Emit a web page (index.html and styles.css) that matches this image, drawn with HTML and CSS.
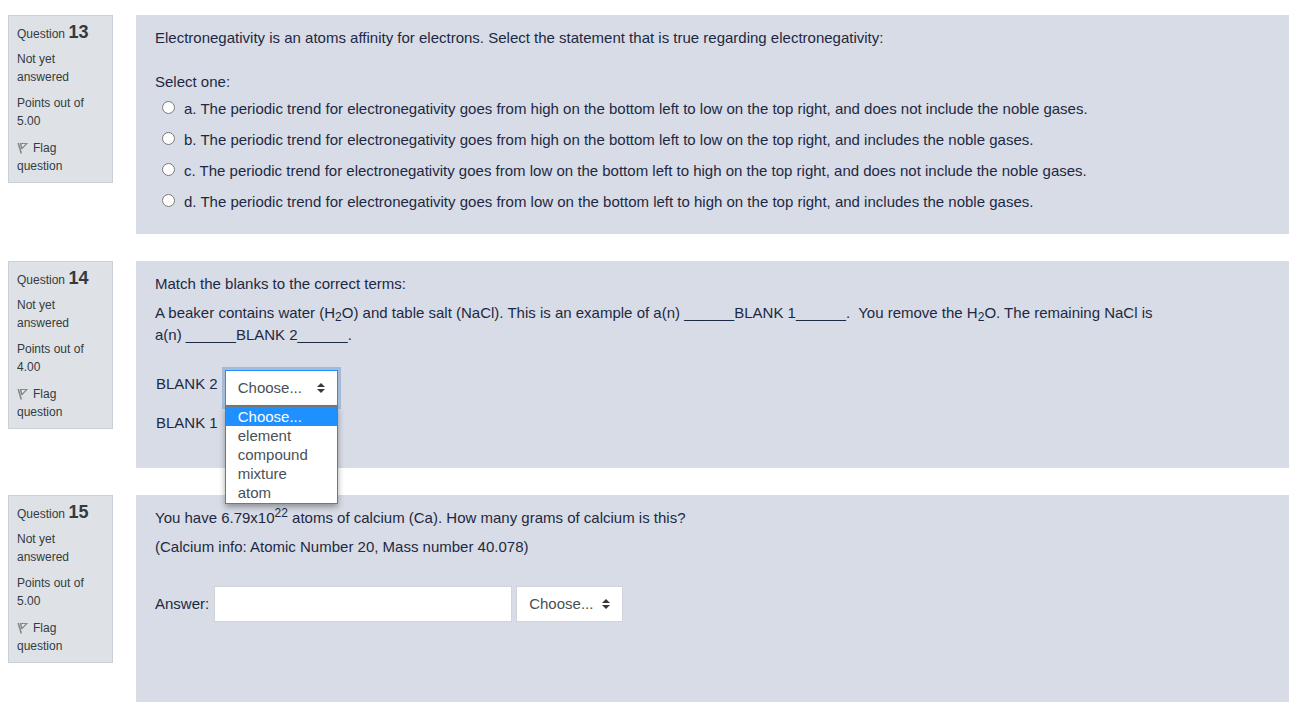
FILE: index.html
```html
<!DOCTYPE html>
<html lang="en">
  <head>
    <meta charset="UTF-8" />
    <meta name="viewport" content="width=device-width, initial-scale=1.0" />
    <title>Quiz</title>
    <link rel="stylesheet" href="styles.css">
  </head>
  <body>
    <!-- Flag icon shared by all questions -->
    <svg class="sprite" aria-hidden="true">
      <symbol id="flag" viewBox="0 0 12 12">
        <path d="M3 1.5H9.8L5 6.5" stroke="#8a8a8a" stroke-width="1.2" fill="#e8e8e8" />
        <path d="M1.2 1L4.3 11.5M3.5 1.5L5 7" stroke="#858585" stroke-width="1.5" fill="none" />
      </symbol>
    </svg>

    <!-- Question 13 -->
    <form class="question">
      <div class="info">
        <h3>Question <span class="number">13</span></h3>
        <p>Not yet answered</p>
        <p>Points out of 5.00</p>
        <a class="flag" href="#"><svg class="flag-icon" aria-hidden="true"><use href="#flag" /></svg>Flag question</a>
      </div>
      <div class="content">
        <p>Electronegativity is an atoms affinity for electrons. Select the statement that is true regarding electronegativity:</p>
        <fieldset class="answers">
          <legend>Select one:</legend>
          <div class="option">
            <input type="radio" id="q13a" name="q13" value="a" />
            <label for="q13a">a. The periodic trend for electronegativity goes from high on the bottom left to low on the top right, and does not include the noble gases.</label>
          </div>
          <div class="option">
            <input type="radio" id="q13b" name="q13" value="b" />
            <label for="q13b">b. The periodic trend for electronegativity goes from high on the bottom left to low on the top right, and includes the noble gases.</label>
          </div>
          <div class="option">
            <input type="radio" id="q13c" name="q13" value="c" />
            <label for="q13c">c. The periodic trend for electronegativity goes from low on the bottom left to high on the top right, and does not include the noble gases.</label>
          </div>
          <div class="option">
            <input type="radio" id="q13d" name="q13" value="d" />
            <label for="q13d">d. The periodic trend for electronegativity goes from low on the bottom left to high on the top right, and includes the noble gases.</label>
          </div>
        </fieldset>
      </div>
    </form>

    <!-- Question 14 -->
    <form class="question">
      <div class="info">
        <h3>Question <span class="number">14</span></h3>
        <p>Not yet answered</p>
        <p>Points out of 4.00</p>
        <a class="flag" href="#"><svg class="flag-icon" aria-hidden="true"><use href="#flag" /></svg>Flag question</a>
      </div>
      <div class="content">
        <p>Match the blanks to the correct terms:</p>
        <p>A beaker contains water (H<sub>2</sub>O) and table salt (NaCl). This is an example of a(n) ______BLANK 1______.&nbsp; You remove the H<sub>2</sub>O. The remaining NaCl is a(n)&nbsp;______BLANK&nbsp;2______.</p>
        <div class="match">
          <div class="match-row">
            <label for="blank2">BLANK 2</label>
            <div class="dropdown">
              <select id="blank2" class="select open" name="blank2">
                <option>Choose...</option>
                <option>element</option>
                <option>compound</option>
                <option>mixture</option>
                <option>atom</option>
              </select>
              <ul class="menu" role="listbox" aria-label="BLANK 2">
                <li class="selected" role="option" aria-selected="true">Choose...</li>
                <li role="option">element</li>
                <li role="option">compound</li>
                <li role="option">mixture</li>
                <li role="option">atom</li>
              </ul>
            </div>
          </div>
          <div class="match-row">
            <label for="blank1">BLANK 1</label>
            <select id="blank1" class="select" name="blank1">
              <option>Choose...</option>
              <option>element</option>
              <option>compound</option>
              <option>mixture</option>
              <option>atom</option>
            </select>
          </div>
        </div>
      </div>
    </form>

    <!-- Question 15 -->
    <form class="question">
      <div class="info">
        <h3>Question <span class="number">15</span></h3>
        <p>Not yet answered</p>
        <p>Points out of 5.00</p>
        <a class="flag" href="#"><svg class="flag-icon" aria-hidden="true"><use href="#flag" /></svg>Flag question</a>
      </div>
      <div class="content">
        <p>You have 6.79x10<sup>22</sup> atoms of calcium (Ca). How many grams of calcium is this?</p>
        <p>(Calcium info: Atomic Number 20, Mass number 40.078)</p>
        <div class="numeric">
          <label for="answer">Answer:</label>
          <input type="text" id="answer" class="answer" name="answer" />
          <select class="select" name="unit" aria-label="Unit">
            <option>Choose...</option>
            <option>g</option>
          </select>
        </div>
      </div>
    </form>
  </body>
</html>
```
FILE: styles.css
```css
* {
  box-sizing: border-box;
}
body {
  margin: 15px 10px 25px 8px;
  font-family: "Liberation Sans", Arial, sans-serif;
  font-size: 15px;
  line-height: 22px;
  color: #1d2943;
  background-color: #fff;
}
.sprite {
  display: none;
}
.question {
  display: flex;
  align-items: flex-start;
  gap: 23px;
  margin-bottom: 27px;
}

/* Left box */
.info {
  flex: 0 0 105px;
  padding: 7px 8px;
  border: 1px solid #cad0d7;
  background-color: #dee2e6;
  color: #343a40;
  font-size: 12px;
  line-height: 18px;
}
.info h3 {
  margin: 0 0 6px;
  font-size: 12px;
  font-weight: normal;
  line-height: 19px;
}
.number {
  font-size: 18px;
  font-weight: bold;
}
.info p {
  margin: 0 0 8px;
}
.flag {
  display: block;
  margin-top: 9px;
  color: inherit;
  text-decoration: none;
}
.flag-icon {
  width: 12px;
  height: 12px;
  margin-right: 4px;
  vertical-align: -2px;
}

/* Question text and answers */
.content {
  flex: 1;
  min-width: 0;
  min-height: 207px;
  padding: 12px 19px 16px;
  background-color: #d8dce6;
}
.content p {
  margin: 0 0 7px;
}
sub,
sup {
  position: relative;
  font-size: 12px;
  line-height: 0;
  vertical-align: baseline;
}
sub {
  bottom: -3px;
}
sup {
  top: -6px;
}
.answers {
  margin: 22px 0 0;
  padding: 0;
  border: 0;
}
.answers legend {
  padding: 0;
  margin-bottom: 5px;
}
.option {
  display: flex;
  align-items: flex-start;
  gap: 9px;
  padding-left: 7px;
  margin-bottom: 9px;
}
.option:last-child {
  margin-bottom: 5px;
}
.option input {
  flex: none;
  width: 13px;
  height: 13px;
  margin: 3px 0 0;
}

.select {
  display: block;
  height: 36px;
  padding: 6px 28px 6px 12px;
  border: 1px solid #ced4da;
  border-radius: 0;
  appearance: none;
  font: inherit;
  color: #495057;
  background: #fff url("data:image/svg+xml,%3Csvg xmlns='http://www.w3.org/2000/svg' viewBox='0 0 4 5'%3E%3Cpath fill='%23343a40' d='M2 0L0 2h4zm0 5L0 3h4z'/%3E%3C/svg%3E") no-repeat right 12px center / 8px 10px;
}
.select.open {
  border-color: #1e90ff;
  box-shadow: 0 0 0 3px #a3bbd6;
}
.match {
  display: flex;
  flex-direction: column;
  gap: 3px;
  margin-top: 24px;
}
.match-row {
  display: flex;
  gap: 7px;
  padding-left: 1px;
}
.match-row label {
  padding-top: 3px;
}
.dropdown {
  position: relative;
}
.menu {
  position: absolute;
  z-index: 1;
  top: 100%;
  left: 0;
  right: 0;
  margin: 0;
  padding: 0 0 1px;
  border: 1px solid #767676;
  background-color: #fff;
  box-shadow: 0 3px 6px rgba(0, 0, 0, 0.35);
  color: #495057;
  line-height: 19px;
  list-style: none;
}
.menu li {
  padding-left: 12px;
}
.menu .selected {
  background-color: #1e90ff;
  color: #fff;
}
.numeric {
  display: flex;
  align-items: center;
  margin-top: 28px;
}
.answer {
  width: 298px;
  height: 36px;
  margin: 0 4px 0 5px;
  padding: 6px 12px;
  border: 1px solid #ced4da;
  font: inherit;
  color: #495057;
}
```
